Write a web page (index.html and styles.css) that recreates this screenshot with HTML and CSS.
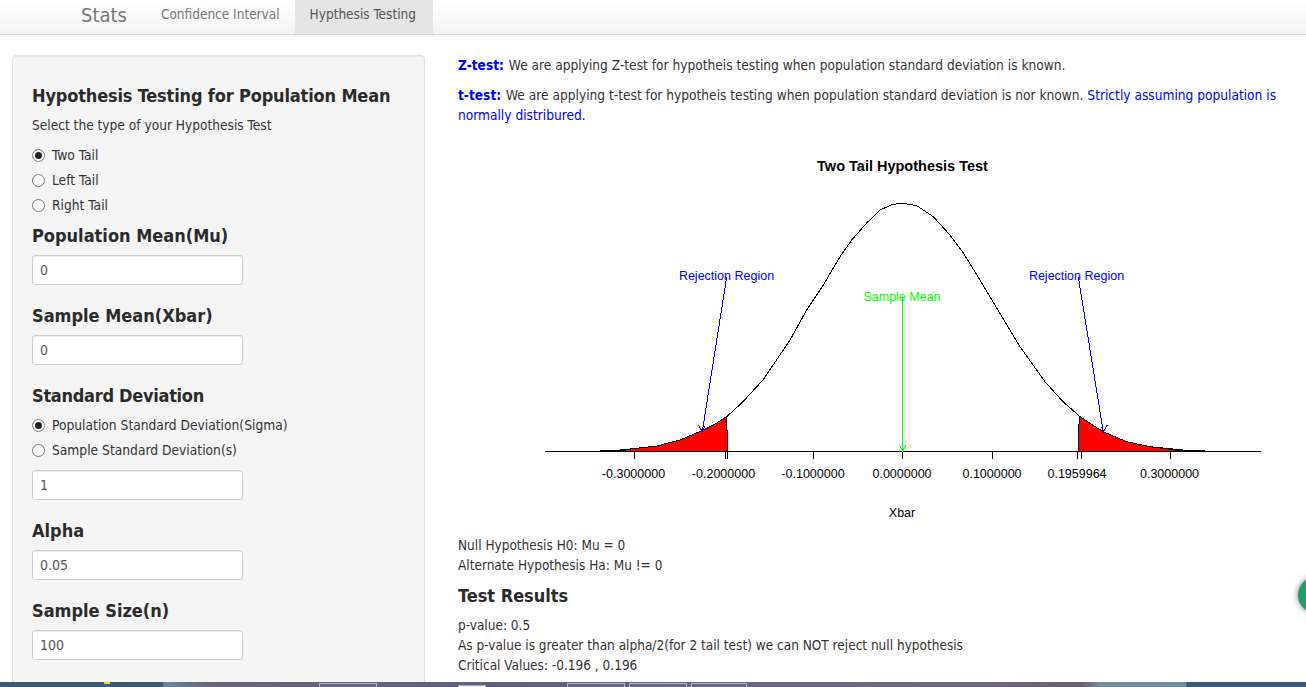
FILE: index.html
```html
<!DOCTYPE html>
<html lang="en">
<head>
<meta charset="utf-8">
<title>Stats</title>
<link rel="stylesheet" href="styles.css">
</head>
<body>
<nav class="navbar">
  <span class="brand">Stats</span>
  <a class="tab">Confidence Interval</a>
  <a class="tab active">Hypthesis Testing</a>
</nav>
<div class="page">
  <aside class="well">
    <h3 class="title">Hypothesis Testing for Population Mean</h3>
    <p class="hint">Select the type of your Hypothesis Test</p>
    <div class="radios">
      <label class="radio"><span class="dot on"></span>Two Tail</label>
      <label class="radio"><span class="dot"></span>Left Tail</label>
      <label class="radio"><span class="dot"></span>Right Tail</label>
    </div>
    <h4 class="field-label first">Population Mean(Mu)</h4>
    <div class="input">0</div>
    <h4 class="field-label">Sample Mean(Xbar)</h4>
    <div class="input">0</div>
    <h4 class="field-label narrow">Standard Deviation</h4>
    <div class="radios tight">
      <label class="radio"><span class="dot on"></span>Population Standard Deviation(Sigma)</label>
      <label class="radio"><span class="dot"></span>Sample Standard Deviation(s)</label>
    </div>
    <div class="input">1</div>
    <h4 class="field-label">Alpha</h4>
    <div class="input">0.05</div>
    <h4 class="field-label">Sample Size(n)</h4>
    <div class="input">100</div>
  </aside>
  <main class="main">
    <p class="note"><b class="blue">Z-test:</b> We are applying Z-test for hypotheis testing when population standard deviation is known.</p>
    <p class="note"><b class="blue">t-test:</b> We are applying t-test for hypotheis testing when population standard deviation is nor known. <span class="blue">Strictly assuming population is normally distribured.</span></p>
    <svg class="plot" viewBox="0 0 848 400" width="848" height="400" xmlns="http://www.w3.org/2000/svg">
      <text class="pt-title" x="444.500" y="36" text-anchor="middle">Two Tail Hypothesis Test</text>
      <g class="crisp">
        <path d="M142 315.700 L162 315 L175 313.700 L198.700 311 L222 305 L243.700 295.700 L258.700 288 L268.700 281.700 L283.700 268 L305 245 L332 205 L348.700 175 L365.300 150 L382 121.700 L393.700 105 L408.700 88 L422 75 L435 69.300 L445.300 68.300 L458.700 70.700 L475.300 81.700 L492 100 L505.300 118 L522 145 L538.700 173 L562 211.700 L587 246.700 L605 266.700 L621.300 281 L632 288.300 L645 296.700 L668.700 306.700 L692 311.700 L725 315 L747 315.700" fill="none" stroke="#000" stroke-width="1"/>
        <path d="M162 316 L175 313.700 L198.700 311 L222 305 L243.700 295.700 L258.700 288 L268.700 281.700 L269.500 316Z" fill="#f00" stroke="#000" stroke-width="1"/>
        <path d="M620 316 L621.300 281 L632 288.300 L645 296.700 L668.700 306.700 L692 311.700 L725 316Z" fill="#f00" stroke="#000" stroke-width="1"/>
        <path d="M142 315.500H162M725 315.500H747" stroke="#000" stroke-width="1.500"/>
        <path d="M87 316.500H803" stroke="#000" stroke-width="1"/>
        <path d="M176.500 316v8M267.500 316v8M269.500 316v8M355.500 316v8M444.500 316v8M534.500 316v8M619.500 316v8M623.500 316v8M712.500 316v8" stroke="#000" stroke-width="1"/>
        <path d="M268.700 142 L244.300 296.700 M240.300 290 L244.300 296.700 L247 290.700 M620.300 142 L645.300 297 M643.700 291.700 L645.300 297 L649.300 290" fill="none" stroke="#00f" stroke-width="1"/>
        <path d="M444.500 163 V316 M441.300 310 L444.500 316 L448 310" fill="none" stroke="#0f0" stroke-width="1"/>
      </g>
      <g class="pt-tick" text-anchor="middle">
        <text x="175.500" y="343">-0.3000000</text>
        <text x="265.500" y="343">-0.2000000</text>
        <text x="355" y="343">-0.1000000</text>
        <text x="444" y="343">0.0000000</text>
        <text x="534" y="343">0.1000000</text>
        <text x="619" y="343">0.1959964</text>
        <text x="711.500" y="343">0.3000000</text>
        <text x="444" y="382">Xbar</text>
      </g>
      <g class="pt-blue" text-anchor="middle">
        <text x="268.500" y="145">Rejection Region</text>
        <text x="618.500" y="145">Rejection Region</text>
      </g>
      <text class="pt-green" x="444" y="166" text-anchor="middle">Sample Mean</text>
    </svg>
    <div class="hypo">Null Hypothesis H0: Mu = 0<br>Alternate Hypothesis Ha: Mu != 0</div>
    <h4 class="results">Test Results</h4>
    <div class="hypo">p-value: 0.5<br>As p-value is greater than alpha/2(for 2 tail test) we can NOT reject null hypothesis<br>Critical Values: -0.196 , 0.196</div>
  </main>
</div>
<div class="fab"></div>
<footer class="taskbar">
  <span class="sun"></span>
  <span class="thumb t1"></span>
  <span class="thumb t2"></span>
  <span class="thumb t3"></span>
  <span class="thumb t3b"></span>
  <span class="thumb t4"></span>
</footer>
</body>
</html>
```
FILE: styles.css
```css
* { box-sizing: border-box; }
html, body { margin: 0; height: 100%; overflow: hidden; }
body { font-family: "DejaVu Sans Condensed", "DejaVu Sans", sans-serif; font-stretch: condensed; font-size: 13.500px; line-height: 20px; color: #333; background: #fff; position: relative; }
.navbar { height: 35px; display: flex; align-items: stretch; padding-left: 66px; background: linear-gradient(#fff, #f4f4f4); border-bottom: 1px solid #d5d5d5; box-shadow: 0 2px 4px rgba(0,0,0,.05); }
.brand { font-size: 20px; color: #777; padding: 0 19px 0 15px; line-height: 30px; }
.tab { color: #777; padding: 0 15px; line-height: 28px; font-size: 13.500px; }
.tab.active { width: 138px; background: #e5e5e5; color: #555; }
.page { display: flex; padding: 20px 15px 0 12px; }
.well { width: 413px; flex: none; height: 640px; margin-right: 33px; padding: 19px 19px 0; background: #f5f5f5; border: 1px solid #e3e3e3; border-radius: 4px; box-shadow: inset 0 1px 1px rgba(0,0,0,.05); }
.title { margin: 11px 0 9px; font-size: 18px; line-height: 20px; font-weight: 700; color: #2b2b2b; letter-spacing: -.16px; }
.hint { margin: 0 0 10px; font-size: 13.600px; }
.radios { display: flex; flex-direction: column; gap: 5px; }
.radios.tight { margin-bottom: 10px; }
.radio { display: flex; align-items: center; height: 20px; font-size: 13.700px; }
.dot { width: 13px; height: 13px; margin-right: 7px; border: 1px solid #767676; border-radius: 50%; background: #fff; position: relative; }
.dot.on::after { content: ""; position: absolute; left: 2px; top: 2px; width: 7px; height: 7px; border-radius: 50%; background: #222; }
.field-label { margin: 1px 0 9px; font-size: 18px; line-height: 20px; font-weight: 700; color: #2b2b2b; }
.field-label.narrow { letter-spacing: -.28px; }
.input + .field-label, .radios.tight + .input + .field-label { margin-top: 21px; }
.field-label.first { margin-top: 11px; }
.input { width: 211px; height: 30px; padding: 4px 7px; background: #fff; border: 1px solid #ccc; border-radius: 3px; color: #555; font-size: 14px; box-shadow: inset 0 1px 1px rgba(0,0,0,.075); }
.main { width: 820px; min-width: 0; }
.note { margin: 0 0 10px; font-size: 13.620px; }
.note b { margin-right: 1px; }
.blue { color: #00f; }
.plot { display: block; margin: 0; }
.crisp { shape-rendering: crispEdges; }
.pt-title { font: 700 14.500px "Liberation Sans", Arial, sans-serif; fill: #000; }
.pt-tick { font: 12.500px "Liberation Sans", Arial, sans-serif; fill: #000; }
.pt-blue { font: 12.500px "Liberation Sans", Arial, sans-serif; fill: #00f; }
.pt-green { font: 12.500px "Liberation Sans", Arial, sans-serif; fill: #0f0; }
.results { margin: 11px 0 9px; font-size: 18px; line-height: 20px; font-weight: 700; color: #2b2b2b; }
.fab { position: absolute; right: -28px; top: 577px; width: 36px; height: 36px; border-radius: 50%; background: #1aa260; box-shadow: 0 0 6px rgba(0,0,0,.5); }
.taskbar { position: absolute; left: 0; right: 0; bottom: 0; height: 5px; display: flex; align-items: flex-start; background: linear-gradient(90deg, #3f5a76 0, #3f5a76 163px, #6b86a0 164px, #6a6478 210px, #5c607c 500px, #6f6a80 900px, #6a6070 1080px, #7a8c98 1100px, #6f8aa0 1186px, #3f5a76 1187px); }
.sun { width: 6px; height: 2px; margin: 0 0 0 104px; background: #e8d820; }
.thumb { height: 4px; margin-top: 1px; border: 1px solid #b0b4c0; border-bottom: 0; background: #64687e; }
.t1 { width: 58px; margin-left: 209px; }
.t2 { width: 28px; margin-left: 81px; margin-top: 3px; height: 2px; background: #e8e8ec; }
.t3 { width: 58px; margin-left: 81px; }
.t3b { width: 58px; margin-left: 4px; }
.t4 { width: 56px; margin-left: 4px; }
```
